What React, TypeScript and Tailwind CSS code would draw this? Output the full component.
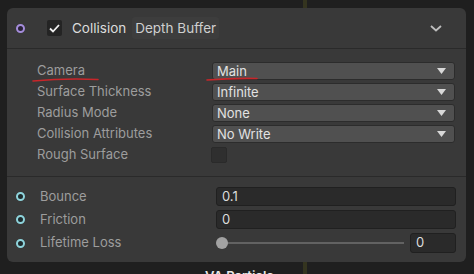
const options = [
  { label: "Camera", value: "Main" },
  { label: "Surface Thickness", value: "Infinite" },
  { label: "Radius Mode", value: "None" },
  { label: "Collision Attributes", value: "No Write" },
];

const fields = [
  { label: "Bounce", value: "0.1" },
  { label: "Friction", value: "0" },
];

function Port({ ring, core }: { ring: string; core: string }) {
  return <span className={`block h-[9px] w-[9px] shrink-0 rounded-full border-2 ${ring} ${core}`} />;
}

function Dropdown({ value }: { value: string }) {
  return (
    <div className="flex h-[18px] w-[243px] items-center justify-between rounded-[3px] border border-[#2c2c2c] bg-[#505050] pl-[4px] pr-[8px] text-[#e2e2e2]">
      <span className="leading-none">{value}</span>
      <svg width="9" height="6" viewBox="0 0 9 6">
        <path d="M0 0h9L4.5 6z" fill="#d8d8d8" />
      </svg>
    </div>
  );
}

export default function App() {
  return (
    <div
      className="relative h-[274px] w-[474px] overflow-hidden bg-[#1f1f1f] pt-[8px] pl-[7px] text-[13px]"
      style={{ fontFamily: "Inter, 'Noto Sans', sans-serif" }}>
      <div className="absolute left-[303px] top-0 h-[8px] w-[4px] bg-[#34341f]" />
      <div className="absolute left-[303px] top-[262px] h-[12px] w-[4px] bg-[#34341f]" />

      <div className="flex h-[254px] w-[459px] flex-col rounded-md bg-[#393939]">
        <div className="flex h-[41px] shrink-0 items-center border-b border-[#2a2a2a] pl-[9px] pr-[24px]">
          <Port ring="border-[#a58ddc]" core="bg-[#2a2238]" />
          <div className="ml-[22px] grid h-[16px] w-[15px] place-items-center rounded-[2px] bg-[#242424]">
            <svg width="11" height="9" viewBox="0 0 11 9">
              <path d="M1 4.5l3 3L10 1" fill="none" stroke="#f0f0f0" strokeWidth="1.8" />
            </svg>
          </div>
          <span className="ml-[10px] text-[13.5px] text-[#dcdcdc]">Collision</span>
          <span className="ml-[6px] rounded-[3px] bg-[#3d3d3d] px-[3px] py-[1px] text-[13.5px] text-[#cfcfcf]">Depth Buffer</span>
          <svg className="ml-auto" width="12" height="7" viewBox="0 0 12 7">
            <path d="M1 1l5 4.5L11 1" fill="none" stroke="#bdbdbd" strokeWidth="1.8" />
          </svg>
        </div>

        <div className="flex flex-col gap-[3px] border-b border-[#2a2a2a] pt-[13px] pb-[12px] pl-[30px]">
          {options.map((o) => (
            <div key={o.label} className="flex h-[18px] items-center">
              <span className="w-[175px] text-[#9d9d9d]">{o.label}</span>
              <Dropdown value={o.value} />
            </div>
          ))}
          <div className="flex h-[18px] items-center">
            <span className="w-[174px] text-[#9d9d9d]">Rough Surface</span>
            <span className="h-[16px] w-[16px] rounded-[2px] border border-[#2a2a2a] bg-[#2f2f2f]" />
          </div>
        </div>

        <div className="flex flex-col gap-[4px] pt-[10px] pl-[9px]">
          {fields.map((f) => (
            <div key={f.label} className="flex h-[19px] items-center">
              <Port ring="border-[#8ed4dc]" core="bg-[#1e2a2c]" />
              <span className="ml-[15px] w-[176px] text-[#9d9d9d]">{f.label}</span>
              <div className="flex h-[19px] w-[240px] items-center rounded-[3px] border border-[#202020] bg-[#2a2a2a] pl-[5px] text-[#dcdcdc]">
                {f.value}
              </div>
            </div>
          ))}
          <div className="flex h-[20px] items-center">
            <Port ring="border-[#8ed4dc]" core="bg-[#1e2a2c]" />
            <span className="ml-[15px] w-[176px] text-[#9d9d9d]">Lifetime Loss</span>
            <div className="relative flex h-[20px] w-[188px] items-center">
              <div className="ml-[5px] h-[2px] w-[183px] bg-[#626262]" />
              <span className="absolute left-0 top-[4px] h-[12px] w-[12px] rounded-full bg-[#a2a2a2]" />
            </div>
            <div className="ml-[6px] flex h-[20px] w-[46px] items-center rounded-[3px] border border-[#202020] bg-[#2a2a2a] pl-[5px] text-[#dcdcdc]">
              0
            </div>
          </div>
        </div>
      </div>

      <div className="ml-[198px] mt-[5px] font-semibold text-[#e8e8e8]">VA Particle</div>

      <svg className="pointer-events-none absolute left-0 top-0" width="474" height="274">
        <path d="M33 81 Q65 78 98 79.5" fill="none" stroke="#c8262a" strokeWidth="1.6" strokeLinecap="round" />
        <path d="M207 80 Q232 78 257 78.5" fill="none" stroke="#c8262a" strokeWidth="1.6" strokeLinecap="round" />
      </svg>
    </div>
  );
}
